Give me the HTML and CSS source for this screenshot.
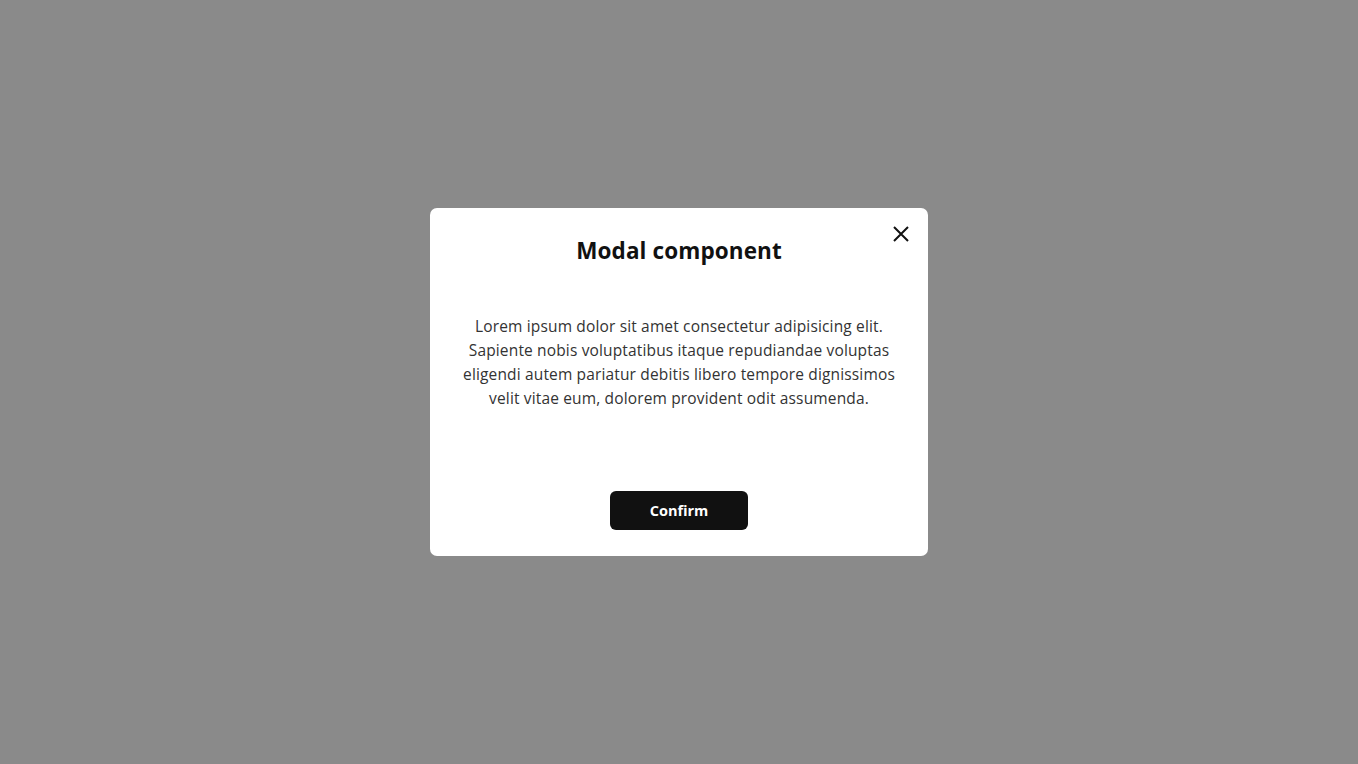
FILE: index.html
```html
<!DOCTYPE html>
<html lang="en">
<head>
<meta charset="utf-8">
<title>Modal component</title>
<link rel="stylesheet" href="styles.css">
</head>
<body>
<div class="overlay">
  <div class="modal">
    <button class="close" aria-label="Close">
      <svg width="18" height="18" viewBox="0 0 18 18"><path d="M2 2L16 16M16 2L2 16" stroke="#111" stroke-width="2" stroke-linecap="butt" fill="none"/></svg>
    </button>
    <h2 class="title">Modal component</h2>
    <p class="text">Lorem ipsum dolor sit amet consectetur adipisicing elit. Sapiente nobis voluptatibus itaque repudiandae voluptas eligendi autem pariatur debitis libero tempore dignissimos velit vitae eum, dolorem provident odit assumenda.</p>
    <div class="actions">
      <button class="confirm">Confirm</button>
    </div>
  </div>
</div>
</body>
</html>
```
FILE: styles.css
```css
* { box-sizing: border-box; }
html, body { margin: 0; height: 100%; }
body {
  background: #8a8a8a;
  font-family: "Open Sans", "Liberation Sans", sans-serif;
}
.overlay {
  height: 100%;
  display: flex;
  align-items: center;
  justify-content: center;
}
.modal {
  position: relative;
  width: 498px;
  background: #fff;
  border-radius: 7px;
  padding: 26px 29px 26px;
  display: flex;
  flex-direction: column;
  align-items: center;
}
.close {
  position: absolute;
  top: 13px;
  right: 14px;
  width: 26px;
  height: 26px;
  border: 0;
  background: none;
  padding: 0;
  display: flex;
  align-items: center;
  justify-content: center;
  cursor: pointer;
}
.title {
  margin: 0;
  font-size: 22.5px;
  line-height: 33px;
  font-weight: 700;
  color: #111;
  letter-spacing: 0.1px;
}
.text {
  margin: 47px 0 0;
  font-size: 15.5px;
  line-height: 24px;
  color: #333;
  text-align: center;
  letter-spacing: 0.15px;
}
.actions {
  margin-top: 81px;
  display: flex;
  justify-content: center;
}
.confirm {
  width: 138px;
  height: 39px;
  border: 0;
  border-radius: 6px;
  background: #111;
  color: #fff;
  font-family: inherit;
  font-size: 14.5px;
  font-weight: 700;
  cursor: pointer;
}
```
